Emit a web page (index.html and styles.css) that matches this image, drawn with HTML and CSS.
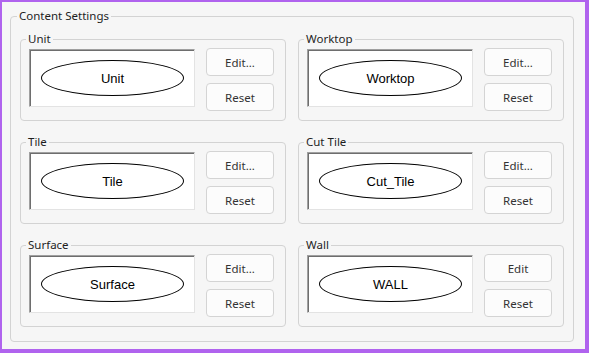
FILE: index.html
```html
<!DOCTYPE html>
<html lang="en">
<head>
    <meta charset="UTF-8">
    <meta name="viewport" content="width=device-width, initial-scale=1.0">
    <title>Content Settings</title>
    <link rel="stylesheet" href="styles.css">
</head>
<body>
    <div class="window">
        <fieldset class="settings">
            <legend>Content Settings</legend>
            <div class="grid">
                <fieldset class="item">
                    <legend>Unit</legend>
                    <div class="item-body">
                        <div class="preview"><div class="shape">Unit</div></div>
                        <div class="buttons">
                            <button>Edit...</button>
                            <button>Reset</button>
                        </div>
                    </div>
                </fieldset>
                <fieldset class="item">
                    <legend>Worktop</legend>
                    <div class="item-body">
                        <div class="preview"><div class="shape">Worktop</div></div>
                        <div class="buttons">
                            <button>Edit...</button>
                            <button>Reset</button>
                        </div>
                    </div>
                </fieldset>
                <fieldset class="item">
                    <legend>Tile</legend>
                    <div class="item-body">
                        <div class="preview"><div class="shape">Tile</div></div>
                        <div class="buttons">
                            <button>Edit...</button>
                            <button>Reset</button>
                        </div>
                    </div>
                </fieldset>
                <fieldset class="item">
                    <legend>Cut Tile</legend>
                    <div class="item-body">
                        <div class="preview"><div class="shape">Cut_Tile</div></div>
                        <div class="buttons">
                            <button>Edit...</button>
                            <button>Reset</button>
                        </div>
                    </div>
                </fieldset>
                <fieldset class="item">
                    <legend>Surface</legend>
                    <div class="item-body">
                        <div class="preview"><div class="shape">Surface</div></div>
                        <div class="buttons">
                            <button>Edit...</button>
                            <button>Reset</button>
                        </div>
                    </div>
                </fieldset>
                <fieldset class="item">
                    <legend>Wall</legend>
                    <div class="item-body">
                        <div class="preview"><div class="shape">WALL</div></div>
                        <div class="buttons">
                            <button>Edit</button>
                            <button>Reset</button>
                        </div>
                    </div>
                </fieldset>
            </div>
        </fieldset>
    </div>
</body>
</html>
```

FILE: styles.css
```css
* {
    box-sizing: border-box;
    margin: 0;
    padding: 0;
}

body {
    background: #f6f6f6;
    font-family: "Noto Sans", "Liberation Sans", sans-serif;
    font-size: 11.5px;
    color: #1e1e1e;
}

.window {
    width: 589px;
    height: 353px;
    background: #f6f6f6;
    border-style: solid;
    border-color: #b063ee;
    border-width: 2px 4px 4px 2px;
    padding: 6px 0 0 8px;
}

fieldset {
    border: 1px solid #d3d3d3;
    border-radius: 4px;
    margin: 0;
}

legend {
    line-height: 16px;
    height: 16px;
    padding: 0 2px;
    margin-left: -3px;
}

.settings {
    width: 564px;
    padding: 7px 9px 14px 9px;
}

.grid {
    display: grid;
    grid-template-columns: 1fr 1fr;
    column-gap: 12px;
    row-gap: 13px;
}

.item {
    height: 90px;
    padding: 1px 11px 9px 8px;
}

.item-body {
    display: flex;
    justify-content: space-between;
}

.preview {
    width: 166px;
    height: 58px;
    margin-top: 1px;
    background: #fff;
    border: 1px solid;
    border-color: #a0a0a0 #e3e3e3 #e3e3e3 #a0a0a0;
    box-shadow: inset 1px 1px 0 #6e6e6e;
    display: flex;
    justify-content: center;
    align-items: center;
    padding-left: 1px;
}

.shape {
    width: 143px;
    height: 36px;
    border: 1px solid #000;
    border-radius: 50%;
    display: flex;
    justify-content: center;
    align-items: center;
    font-family: "Liberation Sans", Arial, sans-serif;
    font-size: 13px;
    color: #000;
}

.buttons {
    display: flex;
    flex-direction: column;
    gap: 7px;
}

.buttons button {
    width: 68px;
    height: 28px;
    background: #fcfcfc;
    border: 1px solid #d4d4d4;
    border-radius: 4px;
    font-family: "Noto Sans", "Liberation Sans", sans-serif;
    font-size: 11.5px;
    color: #333;
    cursor: pointer;
}
```
